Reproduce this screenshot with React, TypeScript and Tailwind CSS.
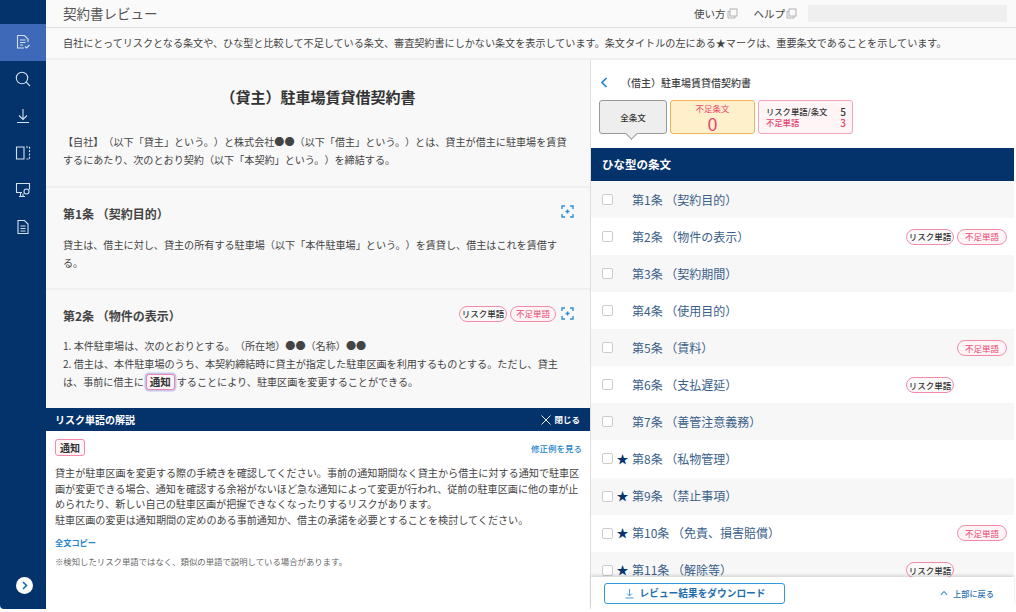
import React from "react";

const font = { fontFamily: '"Noto Sans CJK JP", "Noto Sans", sans-serif' };

function Risk() {
  return (
    <span className="inline-flex items-center justify-center w-[48px] h-[16px] rounded-full border border-[#f58aa8] bg-[#f9f9f9] text-[8.5px] font-medium leading-none text-[#333] shrink-0">
      リスク単語
    </span>
  );
}
function Lack({ narrow }: { narrow?: boolean }) {
  return (
    <span className={`inline-flex items-center justify-center ${narrow ? "w-[46px]" : "w-[50px]"} h-[16px] rounded-full border border-[#f58aa8] bg-[#fff5f7] text-[8.5px] leading-none text-[#e9446f] shrink-0`}>
      不足単語
    </span>
  );
}
function Focus() {
  return (
    <svg width="13" height="13" viewBox="0 0 13 13" fill="none" stroke="#2f8fd6" strokeWidth="1.4" className="shrink-0">
      <path d="M1 4V1h3M9 1h3v3M12 9v3H9M4 12H1V9" />
      <path d="M6.500 4.500v4M4.500 6.500h4" />
    </svg>
  );
}
function NavIcon({ children, active }: { children: React.ReactNode; active?: boolean }) {
  return (
    <div className={`h-[37px] pb-[2px] flex items-center justify-center ${active ? "bg-[#3e69b8]" : ""}`}>
      <svg width="18" height="18" viewBox="0 0 18 18" fill="none" stroke="#d5e0ee" strokeWidth="1.1">
        {children}
      </svg>
    </div>
  );
}
function Copy() {
  return (
    <svg width="11" height="11" viewBox="0 0 11 11" fill="none" stroke="#aaa" strokeWidth="0.9">
      <rect x="3" y="1" width="7" height="7" />
      <path d="M3 3.500H1V10h7V8" />
    </svg>
  );
}

const rows: { t: string; star?: boolean; risk?: boolean; lack?: boolean }[] = [
  { t: "第1条 （契約目的）" },
  { t: "第2条 （物件の表示）", risk: true, lack: true },
  { t: "第3条 （契約期間）" },
  { t: "第4条 （使用目的）" },
  { t: "第5条 （賃料）", lack: true },
  { t: "第6条 （支払遅延）", risk: true },
  { t: "第7条 （善管注意義務）" },
  { t: "第8条 （私物管理）", star: true },
  { t: "第9条 （禁止事項）", star: true },
  { t: "第10条 （免責、損害賠償）", star: true, lack: true },
  { t: "第11条 （解除等）", star: true, risk: true },
];

export default function App() {
  return (
    <div style={font} className="w-[1016px] h-[612px] flex overflow-hidden bg-white text-[#444] [text-spacing-trim:space-all]">
      <aside className="w-[46px] h-[609px] bg-[#04336b] shrink-0 flex flex-col relative rounded-bl-[4px]">
        <div className="h-[24px]" />
        <NavIcon active>
          <path d="M3.500 2.500h7L14 6v3M3.500 2.500v12.500h6.500" />
          <path d="M6 7h5.500M6 9.500h5.500M6 12h3M11 13.500l1.500 1.500 3-3" />
        </NavIcon>
        <NavIcon>
          <circle cx="8" cy="8" r="5.700" />
          <path d="M12.200 12.200l3.800 3.800" />
        </NavIcon>
        <NavIcon>
          <path d="M9 2v10.500M5 8.500l4 4 4-4M3 15.500h12" />
        </NavIcon>
        <NavIcon>
          <path d="M2.500 3h7.500v12H2.500z" />
          <path d="M12 3h3.500v12H12" strokeDasharray="2 1.300" />
        </NavIcon>
        <NavIcon>
          <path d="M8 11.500H2.500v-9h13v6" />
          <circle cx="12.500" cy="10.500" r="2.500" />
          <path d="M5 15.500h6M6.500 12v3.500M9 12.500v3" />
        </NavIcon>
        <NavIcon>
          <path d="M4 2.500h6.500L14 6v9.500H4z" />
          <path d="M6.500 8h5M6.500 10.500h5M6.500 13h5" />
        </NavIcon>
        <div className="absolute left-[16px] bottom-[15px] w-[17px] h-[17px] rounded-full bg-white flex items-center justify-center">
          <svg width="9" height="9" viewBox="0 0 9 9" fill="none" stroke="#0f6fb8" strokeWidth="1.600">
            <path d="M3 1l3.500 3.500L3 8" />
          </svg>
        </div>
      </aside>

      <div className="flex-1 flex flex-col min-w-0">
        <header className="h-[28px] shrink-0 bg-[#fafafa] border-b border-[#ddd] flex items-center pl-[17px] pr-[9px]">
          <span className="text-[13.500px] text-[#555]">契約書レビュー</span>
          <div className="ml-auto flex items-center text-[10.500px] text-[#444]">
            <span>使い方</span>
            <span className="ml-[1px]"><Copy /></span>
            <span className="ml-[16px]">ヘルプ</span>
            <span className="ml-[1px]"><Copy /></span>
            <div className="ml-[11px] w-[199px] h-[17px] bg-[#efefef]" />
          </div>
        </header>
        <div className="h-[32px] shrink-0 bg-[#fafafa] border-b-2 border-[#efefef] flex items-center pl-[17px] text-[10.100px] text-[#444] whitespace-nowrap">
          自社にとってリスクとなる条文や、ひな型と比較して不足している条文、審査契約書にしかない条文を表示しています。条文タイトルの左にある★マークは、重要条文であることを示しています。
        </div>

        <div className="flex-1 min-h-0 flex pb-[3px]">
          <div className="w-[545px] shrink-0 flex flex-col border-r border-[#ddd] bg-[#f8f8f8]">
            <div className="h-[348px] shrink-0 overflow-hidden">
              <div className="h-[128px] border-b-2 border-[#efefef] px-[17px]">
                <h1 className="pt-[25px] text-center text-[15px] font-bold leading-[24px] text-[#333]">（貸主）駐車場賃貸借契約書</h1>
                <p className="mt-[24px] text-[10.100px] leading-[18px] text-[#444]">
                  【自社】（以下「貸主」という。）と株式会社●●（以下「借主」という。）とは、貸主が借主に駐車場を賃貸するにあたり、次のとおり契約（以下「本契約」という。）を締結する。
                </p>
              </div>
              <section className="h-[102px] border-b-2 border-[#efefef] px-[17px]">
                <div className="pt-[16px] flex items-center h-[36px]">
                  <h2 className="text-[12px] font-bold text-[#444]">第1条 （契約目的）</h2>
                  <span className="ml-auto -mr-[1px] -mt-[5px]"><Focus /></span>
                </div>
                <p className="mt-[12px] text-[10.100px] leading-[18px]">
                  貸主は、借主に対し、貸主の所有する駐車場（以下「本件駐車場」という。）を賃貸し、借主はこれを賃借する。
                </p>
              </section>
              <section className="px-[17px]">
                <div className="pt-[16px] flex items-center h-[36px]">
                  <h2 className="text-[12px] font-bold text-[#444]">第2条 （物件の表示）</h2>
                  <div className="ml-auto -mr-[1px] flex items-center gap-[3px] -mt-[5px]">
                    <Risk />
                    <Lack narrow />
                    <span className="ml-[2px]"><Focus /></span>
                  </div>
                </div>
                <p className="mt-[11px] text-[10.100px] leading-[18px]">
                  1. 本件駐車場は、次のとおりとする。（所在地）●●（名称）●●
                  <br />
                  2. 借主は、本件駐車場のうち、本契約締結時に貸主が指定した駐車区画を利用するものとする。ただし、貸主は、事前に借主に
                  <span className="inline-block mx-[2px] px-[3px] leading-[14px] text-[10.500px] border border-[#e98aa8] rounded-[3px] bg-[#fdf3f6] font-bold text-[#333] shadow-[0_0_0_1.500px_#c3c6f0]">通知</span>
                  することにより、駐車区画を変更することができる。
                </p>
              </section>
            </div>

            <div className="h-[23px] shrink-0 bg-[#04336b] flex items-center px-[9px] text-white text-[10px] font-bold">
              リスク単語の解説
              <span className="ml-auto flex items-center gap-[3px] font-bold text-[8.500px] mr-[1px]">
                <svg width="10" height="10" viewBox="0 0 10 10" stroke="#e8eef6" strokeWidth="1" fill="none">
                  <path d="M.5.500l9 9M9.500.500l-9 9" />
                </svg>
                閉じる
              </span>
            </div>
            <div className="flex-1 bg-white px-[9px] relative">
              <span className="absolute right-[8px] top-[11px] text-[8.500px] font-medium text-[#1f86cf]">修正例を見る</span>
              <span className="inline-block mt-[8px] px-[4px] h-[17px] leading-[15px] border border-[#f58aa8] rounded-[3px] bg-[#fff5f7] text-[10px] font-bold text-[#333]">通知</span>
              <p className="mt-[8px] text-[10.100px] leading-[15.700px] text-[#444]">
                貸主が駐車区画を変更する際の手続きを確認してください。事前の通知期間なく貸主から借主に対する通知で駐車区画が変更できる場合、通知を確認する余裕がないほど急な通知によって変更が行われ、従前の駐車区画に他の車が止められたり、新しい自己の駐車区画が把握できなくなったりするリスクがあります。
                <br />
                駐車区画の変更は通知期間の定めのある事前通知か、借主の承諾を必要とすることを検討してください。
              </p>
              <div className="mt-[8px] text-[8.200px] font-bold text-[#1f86cf]">全文コピー</div>
              <div className="mt-[7px] text-[8.400px] text-[#666]">※検知したリスク単語ではなく、類似の単語で説明している場合があります。</div>
            </div>
          </div>

          <div className="flex-1 min-w-0 flex flex-col bg-white relative mr-[2px]">
            <div className="h-[88px] shrink-0 pl-[8px] pt-[13px]">
              <div className="flex items-center h-[18px]">
                <svg width="8" height="11" viewBox="0 0 8 11" fill="none" stroke="#1f86cf" strokeWidth="1.700" className="ml-[1px]">
                  <path d="M6.500 1l-4.500 4.500 4.500 4.500" />
                </svg>
                <span className="ml-[13px] text-[10px] font-medium text-[#444]">（借主）駐車場賃貸借契約書</span>
              </div>
              <div className="mt-[9px] flex gap-[3px]">
                <div className="relative w-[68px] h-[34px] rounded-[3px] border border-[#999] bg-[#eeeeee] flex items-center justify-center text-[8.500px] font-medium text-[#333]">
                  全条文
                  <span className="absolute left-[27px] -bottom-[5px] w-[9px] h-[9px] rotate-45 bg-[#eee] border-r border-b border-[#999]" />
                </div>
                <div className="w-[85px] h-[34px] rounded-[3px] border border-[#f3b25a] bg-[#fff0cc] flex flex-col items-center justify-center text-[#e9446f]">
                  <span className="text-[8.500px] leading-[11px]">不足条文</span>
                  <span className="text-[18px] leading-[18px]">0</span>
                </div>
                <div className="w-[95px] h-[34px] rounded-[3px] border border-[#f5a3b8] bg-[#fff5f7] pl-[7px] pr-[6px] flex flex-col justify-center text-[8.300px] leading-[11.500px]">
                  <div className="flex justify-between text-[#333] font-medium"><span>リスク単語/条文</span><span className="text-[10px]">5</span></div>
                  <div className="flex justify-between font-medium text-[#e9446f]"><span>不足単語</span><span className="text-[10px]">3</span></div>
                </div>
              </div>
            </div>
            <div className="h-[33px] shrink-0 bg-[#04336b] flex items-center pl-[11px] text-white text-[11.500px] font-bold">ひな型の条文</div>
            <div className="flex-1 min-h-0 overflow-hidden">
              {rows.map((r, i) => (
                <div key={r.t} className={`h-[37.070px] flex items-center pl-[11px] pr-[7px] ${i % 2 === 0 ? "bg-[#f7f7f7]" : "bg-white"}`}>
                  <span className="w-[11px] h-[11px] border border-[#ccc] rounded-[2px] bg-white shrink-0" />
                  <span className="w-[19px] shrink-0 flex justify-center text-[12px] leading-none text-[#04336b]">{r.star ? "★" : ""}</span>
                  <span className="text-[12px] text-[#3b5f8a]">{r.t}</span>
                  <div className="ml-auto flex items-center gap-[3px]">
                    {r.risk && <Risk />}
                    {r.risk && !r.lack && <span className="w-[50px]" />}
                    {r.lack && <Lack />}
                  </div>
                </div>
              ))}
            </div>
            <div className="absolute left-0 right-0 bottom-0 h-[32px] bg-white shadow-[0_-2px_3px_rgba(0,0,0,0.12)] flex items-center pl-[13px] pr-[20px] rounded-br-[6px]">
              <button className="w-[181px] h-[21px] border border-[#2f9bdc] rounded-[3px] flex items-center justify-center gap-[5px] text-[9.700px] font-bold text-[#1f6fb0]">
                <svg width="11" height="11" viewBox="0 0 11 11" fill="none" stroke="#2f8fd6" strokeWidth="0.900">
                  <path d="M5.500 1v6.500M3 5.500l2.500 2.500L8 5.500M1.500 10h8" />
                </svg>
                レビュー結果をダウンロード
              </button>
              <span className="ml-auto flex items-center gap-[5px] text-[8.200px] font-medium text-[#1f6fb0]">
                <svg width="8" height="6" viewBox="0 0 8 6" fill="none" stroke="#2f8fd6" strokeWidth="1.100">
                  <path d="M.8 5L4 1.500 7.200 5" />
                </svg>
                上部に戻る
              </span>
            </div>
          </div>
        </div>
      </div>
    </div>
  );
}
